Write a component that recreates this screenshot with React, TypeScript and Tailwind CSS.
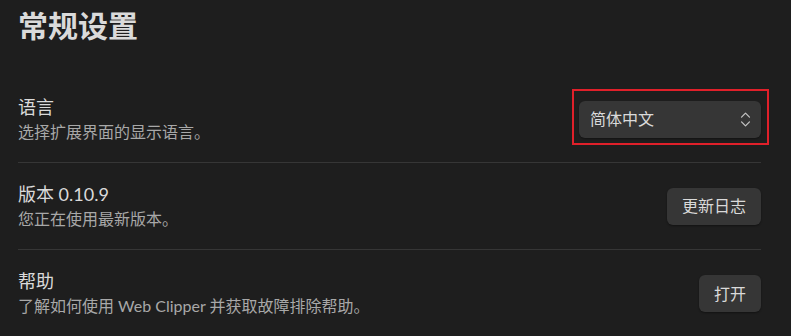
import { ChevronsUpDown } from 'lucide-react'

const font = { fontFamily: '"Noto Sans", "Noto Sans CJK SC", sans-serif' }
const descFont = { fontFamily: 'Lato, "Noto Sans CJK SC", sans-serif' }

interface Row {
  name: string
  desc: string
  action: 'select' | string
}

const rows: Row[] = [
  { name: '语言', desc: '选择扩展界面的显示语言。', action: 'select' },
  { name: '版本 0.10.9', desc: '您正在使用最新版本。', action: '更新日志' },
  { name: '帮助', desc: '了解如何使用 Web Clipper 并获取故障排除帮助。', action: '打开' },
]

export default function App() {
  return (
    <div className="w-[791px] h-[336px] overflow-hidden bg-[#1e1e1e] pl-[18px] pr-[30px]" style={font}>
      <h1 className="pt-[6px] h-[76px] text-[30px] font-bold leading-[40px] text-[#dadada]">常规设置</h1>

      {rows.map((row, idx) => (
        <div
          key={row.name}
          className={`flex items-center justify-between h-[87px] ${idx < rows.length - 1 ? 'border-b border-[#363636]' : ''}`}
        >
          <div className="flex flex-col gap-[3px] pb-[2px]">
            <div className="text-[18px] leading-[24px] text-[#dadada]" style={descFont}>{row.name}</div>
            <div className="text-[16px] leading-[20px] text-[#a8a8a8]" style={descFont}>{row.desc}</div>
          </div>

          {row.action === 'select' ? (
            <div className="relative">
              <div className="flex items-center justify-between w-[182px] h-[37px] pl-[11px] pr-[6px] rounded-[6px] bg-[#363636] shadow-[0_1px_2px_rgba(0,0,0,0.4)] text-[16px] text-[#dadada]">
                <span>简体中文</span>
                <ChevronsUpDown className="w-[19px] h-[19px] text-[#c4c4c4]" strokeWidth={1.6} />
              </div>
              <div className="absolute left-[-7px] top-[-12px] w-[197px] h-[56px] border-2 border-[#e0202a] pointer-events-none" />
            </div>
          ) : (
            <button className="h-[37px] px-[15px] rounded-[6px] bg-[#363636] shadow-[0_1px_2px_rgba(0,0,0,0.4)] text-[16px] text-[#dadada]">
              {row.action}
            </button>
          )}
        </div>
      ))}
    </div>
  )
}
